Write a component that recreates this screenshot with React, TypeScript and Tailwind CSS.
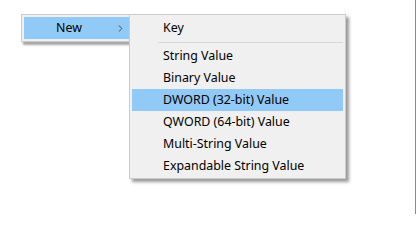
import { ChevronRight } from 'lucide-react';

const items = [
  'String Value',
  'Binary Value',
  'DWORD (32-bit) Value',
  'QWORD (64-bit) Value',
  'Multi-String Value',
  'Expandable String Value',
];

export default function App() {
  return (
    <div
      className="flex h-[214px] w-[417px] bg-white text-[12.4px] text-black"
      style={{ fontFamily: '"Noto Sans", "Segoe UI", sans-serif' }}
    >
      <div className="flex flex-1 items-start pl-[21px] pt-[14px]">
        {/* Parent menu */}
        <div className="w-[108px] border border-r-0 border-[#cccccc] bg-[#f0f0f0] p-[2px] pr-0 shadow-[2px_3px_2px_rgba(0,0,0,0.35)]">
          <div className="flex h-[22px] items-center bg-[#91c9f7] pl-[32px]">
            <span>New</span>
            <ChevronRight className="ml-auto mr-[3px] h-[11px] w-[11px] text-[#333]" strokeWidth={1.75} />
          </div>
        </div>

        {/* Submenu */}
        <div className="w-[217px] border border-[#cccccc] bg-[#f0f0f0] px-[2px] pb-[1px] pt-[2px] shadow-[3px_3px_3px_rgba(0,0,0,0.4)]">
          <div className="flex h-[22px] items-center pl-[31px]">Key</div>
          <div className="flex h-[6px] items-center pl-[26px]">
            <div className="h-px w-full bg-[#d7d7d7]" />
          </div>
          {items.map((label) => (
            <div
              key={label}
              className={
                label === 'DWORD (32-bit) Value'
                  ? 'flex h-[22px] items-center bg-[#91c9f7] pl-[31px]'
                  : 'flex h-[22px] items-center pl-[31px]'
              }
            >
              {label}
            </div>
          ))}
        </div>
      </div>

      {/* Window edge */}
      <div className="mr-px w-px bg-[#8a8a8a]" />
    </div>
  );
}
